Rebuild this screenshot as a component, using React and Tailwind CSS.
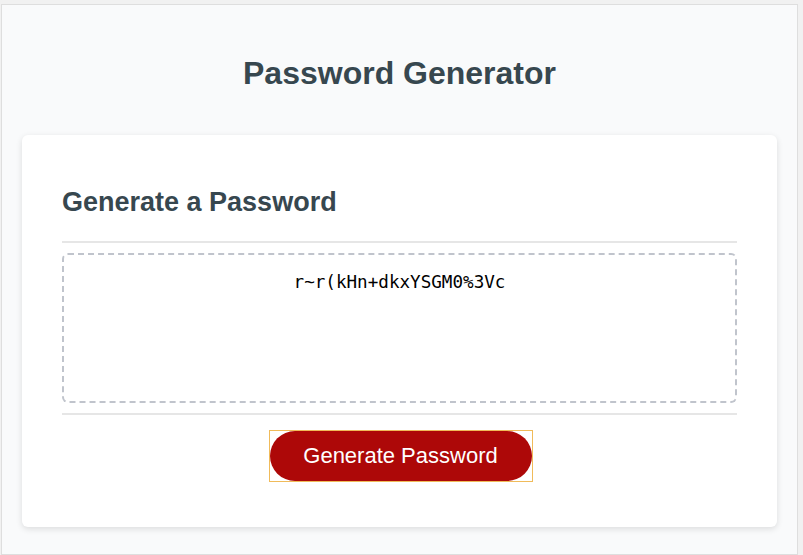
import React from 'react';

const App = () => {
  return (
    <div className="min-h-[555px] bg-[#f1f1f1] pl-[1px] pr-[5px] pt-[4px] flex" style={{ fontFamily: '"Liberation Sans", Arial, sans-serif' }}>
      <div className="flex-1 border border-[#dedede] bg-[#f9fafb] pb-[27px]">
        <h1 className="pt-[49px] pb-[43px] text-center text-[32px] leading-[38px] font-bold text-[#37474f]">
          Password Generator
        </h1>
        <div className="mx-[20px] rounded-md bg-white px-[40px] pt-[50px] pb-[45px] shadow-[0_2px_6px_rgba(0,0,0,0.12)]">
          <h2 className="text-[27px] leading-[34px] font-bold text-[#37474f]">Generate a Password</h2>
          <div className="mt-[22px] border-t-2 border-[#e6e6e6]" />
          <div className="mt-[10px] h-[150px] rounded-md border-2 border-dashed border-[#c0c4cc] pt-[14px] text-center">
            <span className="text-[17.6px] text-black" style={{ fontFamily: '"DejaVu Sans Mono", monospace' }}>
              r~r(kHn+dkxYSGM0%3Vc
            </span>
          </div>
          <div className="mt-[10px] border-t-2 border-[#e6e6e6]" />
          <div className="mt-[15px] flex justify-center pl-[2px]">
            <div className="border border-[#f0bb5a]">
              <button className="block h-[50px] w-[262px] rounded-full bg-[#ad0808] pb-[2px] text-[22px] text-white">
                Generate Password
              </button>
            </div>
          </div>
        </div>
      </div>
    </div>
  );
};

export default App;
